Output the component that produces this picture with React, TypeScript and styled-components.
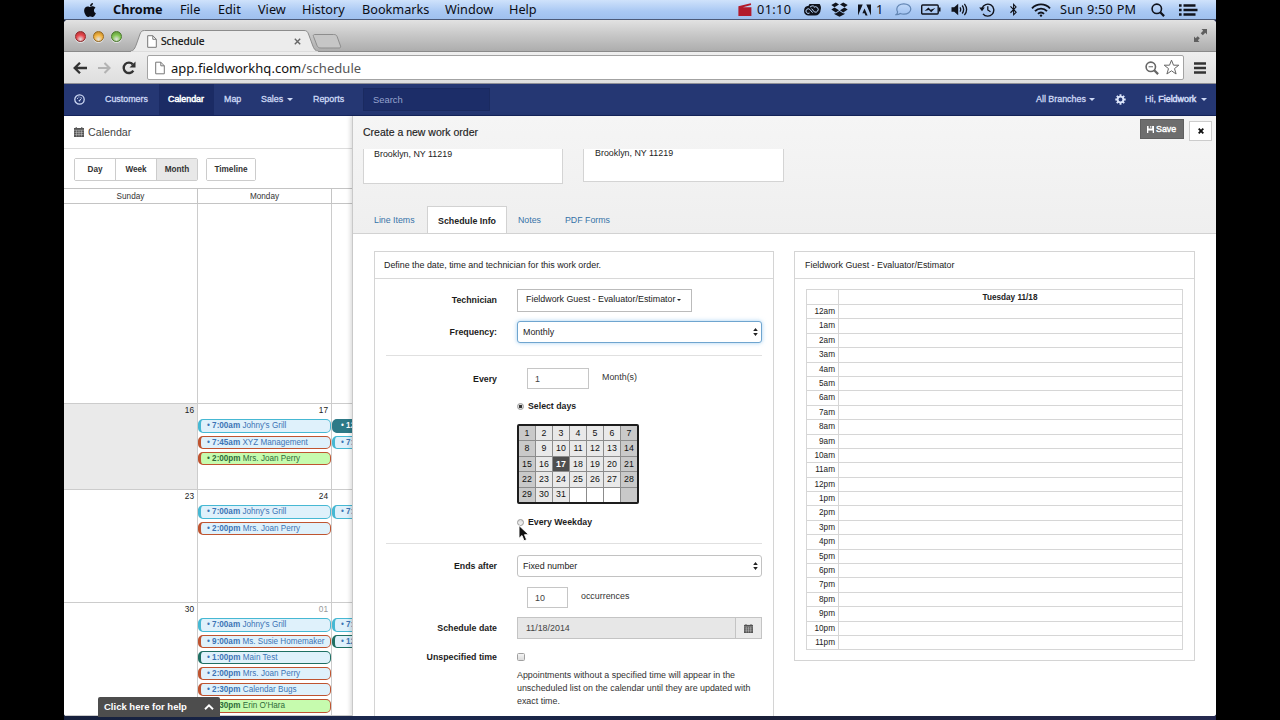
import React from "react";
import styled, { createGlobalStyle, css } from "styled-components";
import { FaApple, FaBluetoothB } from "react-icons/fa";

const sans = '"Helvetica Neue", "Liberation Sans", Arial, sans-serif';
const system = '"Lucida Grande", "Noto Sans", sans-serif';

const Global = createGlobalStyle`
  * { box-sizing: border-box; }
  html, body { margin: 0; background: #000; overflow: hidden; }
  body { font: 8.9px/1 ${sans}; color: #222; }
`;

const Stage = styled.div`
  display: flex;
  justify-content: center;
  width: 1280px;
  height: 720px;
  background: #000;
  overflow: hidden;
`;
const Desktop = styled.div`
  position: relative;
  display: flex;
  flex-direction: column;
  width: 1152px;
  height: 720px;
  background: linear-gradient(90deg, #16203c, #1b2950 30%, #1a2039 60%, #262a50);
`;

/* ---------- system menu bar ---------- */
const MenuBar = styled.div`
  display: flex;
  justify-content: space-between;
  height: 20px;
  padding-left: 18px;
  background: linear-gradient(#cfe2fb, #a9c8f3 60%, #9fc0ee);
  border-bottom: 1px solid #4c5a78;
  font: 12.7px/19px ${system};
  color: #0b0d14;
`;
const MenuGroup = styled.div`
  display: flex;
`;
const Slot = styled.div<{ $w: number; $bold?: boolean; $ls?: number }>`
  display: flex;
  align-items: center;
  width: ${(p) => p.$w}px;
  height: 19px;
  white-space: nowrap;
  font-weight: ${(p) => (p.$bold ? 700 : 400)};
  letter-spacing: ${(p) => p.$ls ?? 0}px;
  svg { display: block; flex: none; }
`;

/* ---------- browser chrome ---------- */
const Window = styled.div`
  display: flex;
  flex-direction: column;
  height: 696px;
  border-radius: 4px 4px 3px 3px;
  overflow: hidden;
  background: #fff;
`;
const TabStrip = styled.div`
  display: flex;
  justify-content: space-between;
  height: 32px;
  background: linear-gradient(#e2e2e2, #c9c9c9 45%, #adadad);
  border-bottom: 1px solid #8a8a8a;
`;
const Lights = styled.div`
  display: flex;
  gap: 7px;
  padding: 11px 0 0 11px;
  width: 66px;
`;
const Light = styled.i<{ $c: string; $e: string }>`
  width: 11px;
  height: 11px;
  border-radius: 50%;
  border: 1px solid ${(p) => p.$e};
  background: radial-gradient(circle at 50% 80%, #fff8 0, ${(p) => p.$c} 50%, ${(p) => p.$e} 115%);
  box-shadow: 0 1px 0 #fff8;
`;
const TabsLeft = styled.div`
  display: flex;
`;
const BrowserTab = styled.div`
  position: relative;
  display: flex;
  align-items: center;
  width: 188px;
  height: 22px;
  margin-top: 10px;
  padding: 0 17px 0 17px;
  font: 10.2px/22px ${system};
  -webkit-text-stroke: 0.2px #111;
  color: #111;
  & > * { position: relative; }
`;
const TabShape = styled.svg`
  && { position: absolute; left: 0; top: 0; }
`;
const TabTitle = styled.span`
  margin-left: 4px;
  flex: 1;
`;
const NewTab = styled.svg`
  margin: 13px 0 0 -6px;
`;
const FullScreen = styled.svg`
  margin: 9px 9px 0 0;
`;
const Toolbar = styled.div`
  display: flex;
  align-items: center;
  height: 32px;
  padding: 0 10px 0 9px;
  background: linear-gradient(#efefef, #dedede);
  border-bottom: 1px solid #8f8f96;
`;
const NavButtons = styled.div`
  display: flex;
  align-items: center;
  gap: 11px;
  width: 74px;
`;
const Omnibox = styled.div`
  display: flex;
  align-items: center;
  width: 1038px;
  height: 25px;
  margin-right: 10px;
  padding: 0 3px 0 7px;
  background: #fff;
  border: 1px solid #a3a3a3;
  border-radius: 2px;
  font: 13px/22px ${system};
  color: #111;
`;
const Url = styled.span`
  flex: 1;
  margin-left: 6px;
  letter-spacing: 0.05px;
  span { color: #555; }
`;
const Star = styled.svg`
  margin-left: 4px;
`;

/* ---------- application navigation ---------- */
const AppNav = styled.div`
  display: flex;
  justify-content: space-between;
  height: 32px;
  background: #253773;
  border-bottom: 1px solid #15245c;
`;
const NavSide = styled.div`
  display: flex;
  align-items: center;
`;
const NavItem = styled.div<{ $w: number; $pad?: number; $active?: boolean }>`
  display: flex;
  align-items: center;
  width: ${(p) => p.$w}px;
  height: 31px;
  padding-left: ${(p) => p.$pad ?? 0}px;
  white-space: nowrap;
  color: ${(p) => (p.$active ? "#fff" : "#ced9f5")};
  -webkit-text-stroke: ${(p) => (p.$active ? 0.5 : 0.3)}px currentColor;
  background: ${(p) => (p.$active ? "#1b2b64" : "transparent")};
  b { font-weight: 400; -webkit-text-stroke: 0.5px currentColor; }
`;
const Caret = styled.i<{ $left?: number; $size?: number }>`
  flex: none;
  margin-left: ${(p) => p.$left ?? 4}px;
  border: ${(p) => p.$size ?? 3}px solid transparent;
  border-top-color: currentColor;
  border-bottom: 0;
`;
const NavSearch = styled.div`
  width: 127px;
  height: 23px;
  padding-left: 9px;
  border: 1px solid #1a2a60;
  background: #1c2d68;
  color: #96a4cf;
  font-size: 9.4px;
  line-height: 21px;
`;

/* ---------- calendar ---------- */
const Page = styled.div`
  display: flex;
  flex: 1;
  min-height: 0;
`;
const CalendarPane = styled.div`
  display: flex;
  flex-direction: column;
  width: 288px;
  overflow: hidden;
`;
const PaneTitle = styled.div`
  display: flex;
  align-items: center;
  gap: 4px;
  height: 33px;
  padding: 1px 0 0 10px;
  border-bottom: 1px solid #dcdcdc;
  color: #444;
  font-size: 10.7px;
`;
const ViewBar = styled.div`
  display: flex;
  gap: 8px;
  height: 40px;
  padding: 9px 0 0 10px;
`;
const ButtonGroup = styled.div`
  display: flex;
  height: 23px;
  border: 1px solid #ccc;
  border-radius: 2px;
`;
const ViewButton = styled.div<{ $w: number; $on?: boolean }>`
  width: ${(p) => p.$w}px;
  line-height: 22px;
  text-align: center;
  font-size: 8.2px;
  font-weight: 700;
  color: #333;
  background: ${(p) => (p.$on ? "#e8e8e8" : "#fff")};
  & + & { border-left: 1px solid #ccc; }
`;
const MonthGrid = styled.div`
  display: grid;
  grid-template-columns: 134px 134px 134px;
  grid-template-rows: 15px 200px 86px 113px 113px;
  border-top: 1px solid #c4c4c4;
`;
const DayName = styled.div`
  border-right: 1px solid #c4c4c4;
  border-bottom: 1px solid #c4c4c4;
  text-align: center;
  font-size: 8.2px;
  line-height: 16px;
  color: #333;
`;
const DayCell = styled.div<{ $past?: boolean }>`
  border-right: 1px solid #ccc;
  border-bottom: 1px solid #ccc;
  background: ${(p) => (p.$past ? "#eaeaea" : "#fff")};
`;
const DayNumber = styled.div<{ $dim?: boolean }>`
  height: 15.4px;
  padding: 2px 3px 0 0;
  text-align: right;
  font-size: 8.3px;
  color: ${(p) => (p.$dim ? "#999" : "#222")};
`;
const eventTones = {
  cyan: ["#46b8d3", "#dff1fb", "#3c74b5"],
  orange: ["#bf5430", "#dff1fb", "#3c74b5"],
  green: ["#bf5430", "#c6fbae", "#2f6b39"],
  forest: ["#1f6f63", "#dff1fb", "#3c74b5"],
  solid: ["#2d7a88", "#2d7a88", "#ffffff"],
};
type Tone = keyof typeof eventTones;
const EventPill = styled.div<{ $tone: Tone }>`
  height: 13.2px;
  width: 133px;
  margin-bottom: 3px;
  padding-left: 6px;
  overflow: hidden;
  border: 1px solid ${(p) => eventTones[p.$tone][0]};
  border-left-width: 3px;
  border-radius: 5px;
  background: ${(p) => eventTones[p.$tone][1]};
  color: ${(p) => eventTones[p.$tone][2]};
  font-size: 8.15px;
  line-height: 11.4px;
  white-space: nowrap;
`;

const HelpTab = styled.div`
  position: absolute;
  left: 34px;
  top: 697px;
  display: flex;
  align-items: center;
  justify-content: space-between;
  width: 122px;
  height: 20px;
  padding: 0 6px;
  border-radius: 2px 2px 0 0;
  background: #4d4d4d;
  color: #fff;
  font-size: 9.5px;
  font-weight: 700;
`;

/* ---------- work order panel ---------- */
const OrderPanel = styled.div`
  display: flex;
  flex-direction: column;
  width: 864px;
  border-left: 1px solid #c9c9c9;
  box-shadow: -2px 0 4px #0002;
  background: #fff;
  z-index: 1;
`;
const OrderTop = styled.div`
  display: flex;
  flex-direction: column;
  height: 118px;
  background: linear-gradient(#f5f5f5, #efefef);
  border-bottom: 1px solid #d2d2d2;
`;
const OrderHeader = styled.div`
  display: flex;
  justify-content: space-between;
  height: 33px;
  padding: 3px 4px 0 10px;
  font-size: 10.5px;
`;
const OrderTitle = styled.div`
  line-height: 26px;
  color: #222;
  -webkit-text-stroke: 0.15px #222;
`;
const Actions = styled.div`
  display: flex;
  gap: 5px;
`;
const SaveButton = styled.div`
  display: flex;
  align-items: center;
  padding-left: 6px;
  width: 44px;
  height: 20px;
  background: #6d6d6d;
  border: 1px solid #5f5f5f;
  color: #fff;
  font-size: 8.9px;
  -webkit-text-stroke: 0.4px #fff;
`;
const SaveText = styled.span`
  margin-left: 2px;
`;
const CloseButton = styled.div`
  display: flex;
  align-items: center;
  justify-content: center;
  width: 23px;
  height: 20px;
  margin-top: 2px;
  background: #fff;
  border: 1px solid #ccc;
`;
const Addresses = styled.div`
  display: flex;
  gap: 20px;
  height: 57px;
  padding-left: 10px;
`;
const Address = styled.div<{ $w: number; $h: number; $top: number; $left: number }>`
  width: ${(p) => p.$w}px;
  height: ${(p) => p.$h}px;
  padding: ${(p) => p.$top}px 0 0 ${(p) => p.$left}px;
  background: #fff;
  border: 1px solid #d4d4d4;
  border-top: 0;
`;
const Tabs = styled.div`
  display: flex;
  height: 27px;
  padding-left: 10px;
  margin-top: 1px;
`;
const Tab = styled.div<{ $w: number; $on?: boolean }>`
  width: ${(p) => p.$w}px;
  padding-left: 11px;
  line-height: 29px;
  color: #3673a8;
  font-size: 8.8px;
  ${(p) =>
    p.$on &&
    css`
      padding-left: 10px;
      border: 1px solid #d2d2d2;
      border-bottom: 0;
      background: #fff;
      color: #222;
      font-weight: 700;
      font-size: 8.85px;
    `}
`;
const Columns = styled.div`
  display: flex;
  gap: 20px;
  flex: 1;
  min-height: 0;
  padding: 17px 0 0 21px;
  align-items: flex-start;
  overflow: hidden;
`;
const Card = styled.div<{ $w: number; $h: number }>`
  width: ${(p) => p.$w}px;
  height: ${(p) => p.$h}px;
  flex: none;
  border: 1px solid #d4d4d4;
`;
const CardTitle = styled.div<{ $pad: number }>`
  height: 27px;
  padding-left: ${(p) => p.$pad}px;
  border-bottom: 1px solid #d8d8d8;
  line-height: 27px;
  color: #222;
`;
const CardBody = styled.div`
  padding: 10px 11px 0;
`;
const Field = styled.div<{ $h: number; $mt?: number }>`
  display: flex;
  align-items: center;
  height: ${(p) => p.$h}px;
  margin-top: ${(p) => p.$mt ?? 0}px;
`;
const Label = styled.div<{ $low?: boolean }>`
  flex: none;
  width: 111px;
  margin-right: 20px;
  padding-top: ${(p) => (p.$low ? 2 : 0)}px;
  text-align: right;
  font-weight: 700;
  font-size: 8.8px;
  color: #1c1c1c;
`;
const Control = styled.div<{ $indent?: number }>`
  display: flex;
  align-items: center;
  height: 100%;
  flex: 1;
  padding-left: ${(p) => p.$indent ?? 0}px;
`;
const DropButton = styled.div`
  display: flex;
  align-items: center;
  width: 175px;
  height: 23px;
  padding: 0 0 2px 8px;
  border: 1px solid #bbb;
  white-space: nowrap;
`;
const Select = styled.div<{ $focus?: boolean }>`
  display: flex;
  align-items: center;
  justify-content: space-between;
  width: 245px;
  height: 22px;
  padding: 0 3px 0 5px;
  border: 1px solid ${(p) => (p.$focus ? "#6fa5cf" : "#c2c2c2")};
  border-radius: 3px;
  background: #fff;
  box-shadow: ${(p) => (p.$focus ? "0 0 4px #66afe999" : "none")};
`;
const TextInput = styled.div<{ $w: number }>`
  width: ${(p) => p.$w}px;
  height: 21px;
  padding-left: 7px;
  border: 1px solid #c6c6c6;
  line-height: 20px;
  color: #444;
`;
const Unit = styled.span<{ $w?: number }>`
  margin-left: 13px;
  padding-bottom: 3px;
  color: #333;
`;
const Rule = styled.div<{ $mt: number }>`
  height: 1px;
  margin-top: ${(p) => p.$mt}px;
  background: #e0e0e0;
`;
const Radio = styled.i<{ $on?: boolean }>`
  width: 7px;
  height: 7px;
  border-radius: 50%;
  border: 1px solid #999;
  background: ${(p) =>
    p.$on ? "radial-gradient(circle, #333 0 1.4px, #ddd 1.9px)" : "linear-gradient(#ddd, #f4f4f4)"};
`;
const Checkbox = styled.i`
  width: 8px;
  height: 8px;
  border-radius: 1.5px;
  border: 1px solid #a0a0a0;
  background: linear-gradient(#f4f4f4, #dcdcdc);
`;
const OptionText = styled.span`
  margin-left: 4px;
  font-weight: 700;
  font-size: 8.75px;
  color: #1c1c1c;
`;
const DayPicker = styled.div`
  display: grid;
  grid-template-columns: repeat(7, 1fr);
  grid-template-rows: repeat(5, 1fr);
  gap: 1px;
  width: 122px;
  height: 80px;
  margin: 12px 0 0 131px;
  border: 2px solid #1d1d1d;
  border-radius: 2px;
  background: #8c8c8c;
`;
const PickDay = styled.div<{ $kind: "end" | "mid" | "sel" | "none" }>`
  display: flex;
  align-items: center;
  justify-content: center;
  font-size: 8.8px;
  color: #111;
  background: ${(p) => ({ end: "#c9c9c9", mid: "#e9e9e9", sel: "#4f4f4f", none: "#fff" })[p.$kind]};
  ${(p) => p.$kind === "sel" && "color: #fff; font-weight: 700;"}
`;
const DateBox = styled.div`
  display: flex;
  align-items: center;
  width: 245px;
  height: 22px;
  border: 1px solid #c4c4c4;
  background: #e7e7e7;
  color: #444;
`;
const DateValue = styled.span`
  flex: 1;
  padding-left: 8px;
`;
const DateIcon = styled.span`
  display: flex;
  align-items: center;
  justify-content: center;
  width: 26px;
  height: 20px;
  border-left: 1px solid #c4c4c4;
  background: #ebebeb;
`;
const Hint = styled.p`
  margin: 6px 0 0 131px;
  width: 246px;
  line-height: 13px;
  color: #333;
  white-space: nowrap;
`;

const Timetable = styled.div`
  display: grid;
  grid-template-columns: 32px 1fr;
  grid-template-rows: 15px repeat(24, 14.4px);
  border: 1px solid #d6d6d6;
  border-bottom: 0;
  font-size: 8.2px;
`;
const HourCell = styled.div`
  padding-right: 3px;
  border-right: 1px solid #d6d6d6;
  border-bottom: 1px solid #d6d6d6;
  text-align: right;
  line-height: 14px;
  color: #222;
`;
const SlotCell = styled.div`
  border-bottom: 1px solid #d6d6d6;
  padding-right: 1px;
  text-align: center;
  font-weight: 700;
  line-height: 15px;
`;

const Pointer = styled.svg`
  position: absolute;
  left: 454px;
  top: 524px;
  z-index: 3;
`;

/* ---------- icons ---------- */
const PageIcon = ({ w, h }: { w: number; h: number }) => (
  <svg width={w} height={h} viewBox="0 0 10 13">
    <path d="M.7.7h5.1l3.5 3.6v8H.7z" fill="#fff" stroke="#777" />
    <path d="M5.8.7v3.6h3.5" fill="none" stroke="#777" />
  </svg>
);
const CalIcon = ({ s = 10 }: { s?: number }) => (
  <svg width={s} height={s} viewBox="0 0 10 10">
    <path d="M0 1h10v9H0z" fill="#555" />
    <path d="M2.2 0v2M7.8 0v2" stroke="#555" />
    <path d="M0 3.2h10M.5 5.4h9M.5 7.6h9M2.6 3.2v6.3M5 3.2v6.3M7.4 3.2v6.3" stroke="#ddd" strokeWidth=".45" />
  </svg>
);
const UpDown = () => (
  <svg width="5" height="8" viewBox="0 0 5 8">
    <path d="M.2 3 2.5 0l2.300 3zM.2 5l2.300 3 2.300-3z" fill="#222" />
  </svg>
);
const Clapper = () => (
  <svg width="14" height="13" viewBox="0 0 14 13">
    <path d="M.4 3.200 12.800.3l.4 1.700L5 4.200h8.400V13H.4z" fill="#b21a2b" />
  </svg>
);
const Cloud = () => (
  <svg width="18" height="12" viewBox="0 0 18 12">
    <path d="M5.600 1.800A5.900 5.900 0 0 1 17.600 6a5.500 5.500 0 0 1-5.500 5.500H5A4.900 4.900 0 0 1 5.600 1.800z" fill="#10131c" />
    <path
      d="M9.600 8.700 6.800 5.400a2.300 2.300 0 1 0-.2 3.600M8.600 4.600l2.700 3.300a2.700 2.700 0 1 0-.4-4.600M7 3.200c1.300-1.500 3-1.700 4.200-.8"
      fill="none"
      stroke="#bcd5f8"
      strokeWidth="1"
    />
  </svg>
);
const Boxes = () => (
  <svg width="17" height="15" viewBox="0 0 17 15">
    <path
      d="M4.800.4 8 2.500 3.500 5.200.3 2.900zM12.200.4 9 2.500l4.500 2.700 3.200-2.300zM.3 7.600l3.200-2L8 8.300l-3.200 2.200zM16.700 7.600l-3.200-2L9 8.300l3.200 2.200zM8.500 9.100l3.800 2.500 1.100-.6v1.300l-4.900 2.500-4.900-2.500V11l1.100.6z"
      fill="#10131c"
    />
  </svg>
);
const Adobe = () => (
  <svg width="13" height="12" viewBox="0 0 13 12">
    <path d="M0 .5h4.700L0 11.500zM13 .5H8.300l4.700 11zM6.500 4.400l3.100 7.100H7.500l-.9-2.200H4.400z" fill="#10131c" />
  </svg>
);
const Bubble = () => (
  <svg width="17" height="13" viewBox="0 0 17 13">
    <path
      d="M8.800.8c3.900 0 7 2.300 7 5.200s-3.100 5.200-7 5.200c-1.300 0-2.600-.3-3.600-.7-1.100.9-2.700 1.300-4.200 1.200 1-.6 1.600-1.600 1.600-2.900C2 8 1.800 7 1.800 6c0-2.900 3.100-5.200 7-5.200z"
      fill="none"
      stroke="#6285b3"
      strokeWidth="1.200"
    />
  </svg>
);
const Battery = () => (
  <svg width="20" height="11" viewBox="0 0 20 11">
    <rect x=".7" y="1" width="16.500" height="9" rx="1" fill="none" stroke="#10131c" strokeWidth="1.400" />
    <path d="M18 3.600h1.500v3.800H18z" fill="#10131c" />
    <path d="m3.500 6.900 4-3.400 2.100 2.300 4.700-1.900-4.100 4.300-2.300-2.100z" fill="#10131c" />
  </svg>
);
const Speaker = () => (
  <svg width="17" height="13" viewBox="0 0 17 13">
    <path d="M.5 4.300h2.700L7.200.8v11.400L3.200 8.700H.5z" fill="#10131c" />
    <path d="M9 4.300c.9 1.400.9 3 0 4.400M11.200 2.500c1.800 2.500 1.800 5.500 0 8M13.400.8c2.800 3.600 2.800 7.800 0 11.400" fill="none" stroke="#10131c" strokeWidth="1.300" />
  </svg>
);
const TimeMachine = () => (
  <svg width="16" height="14" viewBox="0 0 16 14">
    <path d="M3.100 5.200A6 6 0 1 1 4 10.800" fill="none" stroke="#10131c" strokeWidth="1.400" />
    <path d="M.2 4.600h5.600L3 8.200z" fill="#10131c" />
    <path d="M8.800 3.300V7l2.700 1.700" fill="none" stroke="#10131c" strokeWidth="1.300" />
  </svg>
);
const Wifi = () => (
  <svg width="20" height="14" viewBox="0 0 20 14">
    <path d="M1 5.300c5-5.200 13-5.200 18 0M4 8.200c3.400-3.500 8.600-3.500 12 0M7 10.800c1.700-1.700 4.300-1.700 6 0" fill="none" stroke="#10131c" strokeWidth="1.900" />
    <circle cx="10" cy="12.600" r="1.200" fill="#10131c" />
  </svg>
);
const Magnifier = ({ color, minus }: { color: string; minus?: boolean }) => (
  <svg width="14" height="14" viewBox="0 0 14 14">
    <circle cx="5.800" cy="5.800" r="4.700" fill="none" stroke={color} strokeWidth="1.600" />
    <path d="m9.200 9.200 3.900 3.900" stroke={color} strokeWidth="2.200" />
    {minus && <path d="M3.600 5.800H8" stroke={color} strokeWidth="1.100" />}
  </svg>
);
const ListIcon = () => (
  <svg width="19" height="12" viewBox="0 0 19 12">
    <path d="M0 1.500h2.600M4.500 1.500H16.500M0 6h2.600M4.500 6h14M0 10.500h2.600M4.500 10.500H16.500" stroke="#10131c" strokeWidth="2.400" />
  </svg>
);
const Gauge = () => (
  <svg width="11" height="11" viewBox="0 0 11 11" fill="none" stroke="#ced9f5">
    <circle cx="5.500" cy="5.500" r="4.700" strokeWidth="1.300" />
    <path d="M3 4.400h1M4.400 3h1M7 3.200v1M5.500 6.500l2-2" strokeWidth="1" />
    <circle cx="5.500" cy="6.600" r=".9" fill="#ced9f5" stroke="none" />
  </svg>
);
const Gear = () => (
  <svg width="11" height="11" viewBox="0 0 11 11">
    <path d="M5.500.3v10.400M.3 5.500h10.400M1.800 1.800l7.400 7.400M9.200 1.800 1.800 9.200" stroke="#dbe4fa" strokeWidth="1.900" />
    <circle cx="5.500" cy="5.500" r="2.900" fill="#253773" stroke="#dbe4fa" strokeWidth="1.900" />
  </svg>
);

/* ---------- data ---------- */
type Ev = [Tone, string, string];
const monday: Record<string, Ev[]> = {
  w1: [
    ["cyan", "7:00am", "Johny's Grill"],
    ["orange", "7:45am", "XYZ Management"],
    ["green", "2:00pm", "Mrs. Joan Perry"],
  ],
  w2: [
    ["cyan", "7:00am", "Johny's Grill"],
    ["orange", "2:00pm", "Mrs. Joan Perry"],
  ],
  w3: [
    ["cyan", "7:00am", "Johny's Grill"],
    ["orange", "9:00am", "Ms. Susie Homemaker"],
    ["forest", "1:00pm", "Main Test"],
    ["orange", "2:00pm", "Mrs. Joan Perry"],
    ["orange", "2:30pm", "Calendar Bugs"],
    ["green", "2:30pm", "Erin O'Hara"],
  ],
};
const tuesday: Record<string, Ev[]> = {
  w1: [["solid", "12", ""], ["cyan", "7:", ""]],
  w2: [["cyan", "7:", ""]],
  w3: [["cyan", "7:", ""], ["forest", "12", ""]],
};
const weeks = [
  { id: "w1", sun: "16", mon: "17", past: true },
  { id: "w2", sun: "23", mon: "24" },
  { id: "w3", sun: "30", mon: "01", dim: true },
];
const hours = ["am", "pm"].flatMap((m) => [12, 1, 2, 3, 4, 5, 6, 7, 8, 9, 10, 11].map((h) => `${h}${m}`));

const Events = ({ list }: { list: Ev[] }) => (
  <>
    {list.map(([tone, time, name], i) => (
      <EventPill key={i} $tone={tone}>
        • <b>{time}</b> {name}
      </EventPill>
    ))}
  </>
);

const pickKind = (d: number) => (d === 17 ? "sel" : d % 7 === 0 || d % 7 === 1 ? "end" : d > 31 ? "none" : "mid");

export default function App() {
  return (
    <Stage>
      <Global />
      <Desktop>
        <MenuBar>
          <MenuGroup>
            <Slot $w={31}><FaApple size={16} /></Slot>
            <Slot $w={67} $bold>Chrome</Slot>
            <Slot $w={38}>File</Slot>
            <Slot $w={40}>Edit</Slot>
            <Slot $w={44}>View</Slot>
            <Slot $w={60}>History</Slot>
            <Slot $w={83}>Bookmarks</Slot>
            <Slot $w={64}>Window</Slot>
            <Slot $w={40}>Help</Slot>
          </MenuGroup>
          <MenuGroup>
            <Slot $w={19}><Clapper /></Slot>
            <Slot $w={46} $ls={0.4}>01:10</Slot>
            <Slot $w={28}><Cloud /></Slot>
            <Slot $w={27}><Boxes /></Slot>
            <Slot $w={18}><Adobe /></Slot>
            <Slot $w={19}>1</Slot>
            <Slot $w={26}><Bubble /></Slot>
            <Slot $w={30}><Battery /></Slot>
            <Slot $w={28}><Speaker /></Slot>
            <Slot $w={28}><TimeMachine /></Slot>
            <Slot $w={24}><FaBluetoothB size={13} /></Slot>
            <Slot $w={29}><Wifi /></Slot>
            <Slot $w={91} $ls={0.25}>Sun 9:50 PM</Slot>
            <Slot $w={28}><Magnifier color="#10131c" /></Slot>
            <Slot $w={37}><ListIcon /></Slot>
          </MenuGroup>
        </MenuBar>

        <Window>
          <TabStrip>
            <TabsLeft>
              <Lights>
                <Light $c="#e8474d" $e="#8f2a2c" />
                <Light $c="#f3b33f" $e="#98691f" />
                <Light $c="#83c653" $e="#4a7a2c" />
              </Lights>
              <BrowserTab>
                <TabShape width="190" height="22" viewBox="0 0 190 22">
                  <path d="M0 21.500C4 21 5 18 6.500 14L10 4C11 1.500 12 .5 14.500.5H174c2.500 0 3.500 1 4.500 3.500l4 11c1.500 4 2.500 6 6.500 6.500V22H0z" fill="#ececec" stroke="#8c8c8c" />
                  <path d="M1 21.800h187" stroke="#ececec" />
                </TabShape>
                <PageIcon w={10} h={13} />
                <TabTitle>Schedule</TabTitle>
                <svg width="7" height="7" viewBox="0 0 7 7"><path d="m.8.8 5.400 5.400M6.200.8.8 6.200" stroke="#666" strokeWidth="1.400" /></svg>
              </BrowserTab>
              <NewTab width="32" height="16" viewBox="0 0 32 16">
                <path d="M2.500 1.500h19c2 0 3 .5 3.600 2L28.500 13c.4 1.200 0 2-1.500 2H9c-2.200 0-3.200-.8-4-2.500L1.500 3.500c-.5-1.200 0-2 1-2z" fill="#c6c6c6" stroke="#8d8d8d" />
              </NewTab>
            </TabsLeft>
            <FullScreen width="13" height="13" viewBox="0 0 13 13">
              <path d="M7.500 0H13v5.500l-1.700-1.700-2.500 2.500-2.100-2.100L9.200 1.700zM5.500 13H0V7.500l1.700 1.700 2-2 2.100 2.100-2 2z" fill="#5f5f5f" />
            </FullScreen>
          </TabStrip>
          <Toolbar>
            <NavButtons>
              <svg width="14" height="12" viewBox="0 0 14 12"><path d="M7 .8 1.700 6 7 11.200M1.700 6H14" fill="none" stroke="#333" strokeWidth="2.300" /></svg>
              <svg width="13" height="12" viewBox="0 0 13 12"><path d="m6.500 1 5 5-5 5M11.500 6H0" fill="none" stroke="#b3b3b3" strokeWidth="2.100" /></svg>
              <svg width="14" height="14" viewBox="0 0 14 14">
                <path d="M11.300 9.600A5.200 5.200 0 1 1 10.800 3.400" fill="none" stroke="#333" strokeWidth="2.400" />
                <path d="M13.500.5v6H7.500z" fill="#333" />
              </svg>
            </NavButtons>
            <Omnibox>
              <PageIcon w={10} h={14} />
              <Url>app.fieldworkhq.com<span>/schedule</span></Url>
              <Magnifier color="#666" minus />
              <Star width="17" height="17" viewBox="0 0 17 17">
                <path d="m8.500 1.200 2 5h5.300l-4.300 3.400 1.600 5.400-4.600-3.200L3.900 15l1.600-5.400L1.200 6.200h5.300z" fill="#fff" stroke="#666" />
              </Star>
            </Omnibox>
            <svg width="12" height="12" viewBox="0 0 12 12"><path d="M0 1.500h12M0 6h12M0 10.500h12" stroke="#333" strokeWidth="2.400" /></svg>
          </Toolbar>

          <AppNav>
            <NavSide>
              <NavItem $w={41} $pad={10}><Gauge /></NavItem>
              <NavItem $w={54}>Customers</NavItem>
              <NavItem $w={55} $pad={9} $active>Calendar</NavItem>
              <NavItem $w={47} $pad={10}>Map</NavItem>
              <NavItem $w={52}>Sales<Caret /></NavItem>
              <NavItem $w={50}>Reports</NavItem>
              <NavSearch>Search</NavSearch>
            </NavSide>
            <NavSide>
              <NavItem $w={79}>All Branches<Caret $left={3} /></NavItem>
              <NavItem $w={30}><Gear /></NavItem>
              <NavItem $w={71}>Hi,&nbsp;<b>Fieldwork</b><Caret $left={5} /></NavItem>
            </NavSide>
          </AppNav>

          <Page>
            <CalendarPane>
              <PaneTitle><CalIcon />Calendar</PaneTitle>
              <ViewBar>
                <ButtonGroup>
                  <ViewButton $w={40}>Day</ViewButton>
                  <ViewButton $w={41}>Week</ViewButton>
                  <ViewButton $w={41} $on>Month</ViewButton>
                </ButtonGroup>
                <ButtonGroup>
                  <ViewButton $w={48}>Timeline</ViewButton>
                </ButtonGroup>
              </ViewBar>
              <MonthGrid>
                <DayName>Sunday</DayName>
                <DayName>Monday</DayName>
                <DayName />
                <DayCell />
                <DayCell />
                <DayCell />
                {weeks.map((w) => (
                  <React.Fragment key={w.id}>
                    <DayCell $past={w.past}><DayNumber>{w.sun}</DayNumber></DayCell>
                    <DayCell>
                      <DayNumber $dim={w.dim}>{w.mon}</DayNumber>
                      <Events list={monday[w.id]} />
                    </DayCell>
                    <DayCell>
                      <DayNumber />
                      <Events list={tuesday[w.id]} />
                    </DayCell>
                  </React.Fragment>
                ))}
              </MonthGrid>
            </CalendarPane>

            <OrderPanel>
              <OrderTop>
                <OrderHeader>
                  <OrderTitle>Create a new work order</OrderTitle>
                  <Actions>
                    <SaveButton>
                      <svg width="7" height="7" viewBox="0 0 8 8"><path d="M0 0h1.800v2.800h4V0H8v8H6.500V5h-5v3H0z" fill="#fff" /><path d="M3.700 0h1.200v2H3.700z" fill="#fff" /></svg>
                      <SaveText>Save</SaveText>
                    </SaveButton>
                    <CloseButton>
                      <svg width="6" height="6" viewBox="0 0 6 6"><path d="m.7.7 4.600 4.600M5.300.7.7 5.300" stroke="#111" strokeWidth="1.900" /></svg>
                    </CloseButton>
                  </Actions>
                </OrderHeader>
                <Addresses>
                  <Address $w={200} $h={35} $top={1} $left={10}>Brooklyn, NY 11219</Address>
                  <Address $w={201} $h={33} $top={0} $left={11}>Brooklyn, NY 11219</Address>
                </Addresses>
                <Tabs>
                  <Tab $w={64}>Line Items</Tab>
                  <Tab $w={80} $on>Schedule Info</Tab>
                  <Tab $w={47}>Notes</Tab>
                  <Tab $w={70}>PDF Forms</Tab>
                </Tabs>
              </OrderTop>

              <Columns>
                <Card $w={400} $h={500}>
                  <CardTitle $pad={9}>Define the date, time and technician for this work order.</CardTitle>
                  <CardBody>
                    <Field $h={23}>
                      <Label>Technician</Label>
                      <Control><DropButton>Fieldwork Guest - Evaluator/Estimator<Caret $left={2} $size={2.5} /></DropButton></Control>
                    </Field>
                    <Field $h={22} $mt={9}>
                      <Label>Frequency:</Label>
                      <Control><Select $focus>Monthly<UpDown /></Select></Control>
                    </Field>
                    <Rule $mt={12} />
                    <Field $h={21} $mt={12}>
                      <Label $low>Every</Label>
                      <Control $indent={10}><TextInput $w={62}>1</TextInput><Unit>Month(s)</Unit></Control>
                    </Field>
                    <Field $h={12} $mt={11}>
                      <Label />
                      <Control><Radio $on /><OptionText>Select days</OptionText></Control>
                    </Field>
                    <DayPicker>
                      {Array.from({ length: 35 }, (_, i) => i + 1).map((d) => (
                        <PickDay key={d} $kind={pickKind(d)}>{d <= 31 ? d : ""}</PickDay>
                      ))}
                    </DayPicker>
                    <Field $h={12} $mt={12}>
                      <Label />
                      <Control><Radio /><OptionText>Every Weekday</OptionText></Control>
                    </Field>
                    <Rule $mt={15} />
                    <Field $h={22} $mt={11}>
                      <Label>Ends after</Label>
                      <Control><Select>Fixed number<UpDown /></Select></Control>
                    </Field>
                    <Field $h={21} $mt={10}>
                      <Label />
                      <Control $indent={10}><TextInput $w={41}>10</TextInput><Unit>occurrences</Unit></Control>
                    </Field>
                    <Field $h={22} $mt={9}>
                      <Label>Schedule date</Label>
                      <Control><DateBox><DateValue>11/18/2014</DateValue><DateIcon><CalIcon s={9} /></DateIcon></DateBox></Control>
                    </Field>
                    <Field $h={12} $mt={12}>
                      <Label>Unspecified time</Label>
                      <Control><Checkbox /></Control>
                    </Field>
                    <Hint>
                      Appointments without a specified time will appear in the<br />
                      unscheduled list on the calendar until they are updated with<br />
                      exact time.
                    </Hint>
                  </CardBody>
                </Card>

                <Card $w={401} $h={410}>
                  <CardTitle $pad={10}>Fieldwork Guest - Evaluator/Estimator</CardTitle>
                  <CardBody>
                    <Timetable>
                      <HourCell />
                      <SlotCell>Tuesday 11/18</SlotCell>
                      {hours.map((h) => (
                        <React.Fragment key={h}>
                          <HourCell>{h}</HourCell>
                          <SlotCell />
                        </React.Fragment>
                      ))}
                    </Timetable>
                  </CardBody>
                </Card>
              </Columns>
            </OrderPanel>
          </Page>
        </Window>

        <HelpTab>
          Click here for help
          <svg width="10" height="6" viewBox="0 0 10 6"><path d="m1 5.200 4-3.800 4 3.800" fill="none" stroke="#fff" strokeWidth="1.900" /></svg>
        </HelpTab>
        <Pointer width="12" height="19" viewBox="0 0 12 19">
          <path d="M1 1.500v12.800l3-2.800 2 5.200 2.600-1-2.100-5h4.200z" fill="#111" stroke="#fff" strokeWidth=".9" />
        </Pointer>
      </Desktop>
    </Stage>
  );
}
